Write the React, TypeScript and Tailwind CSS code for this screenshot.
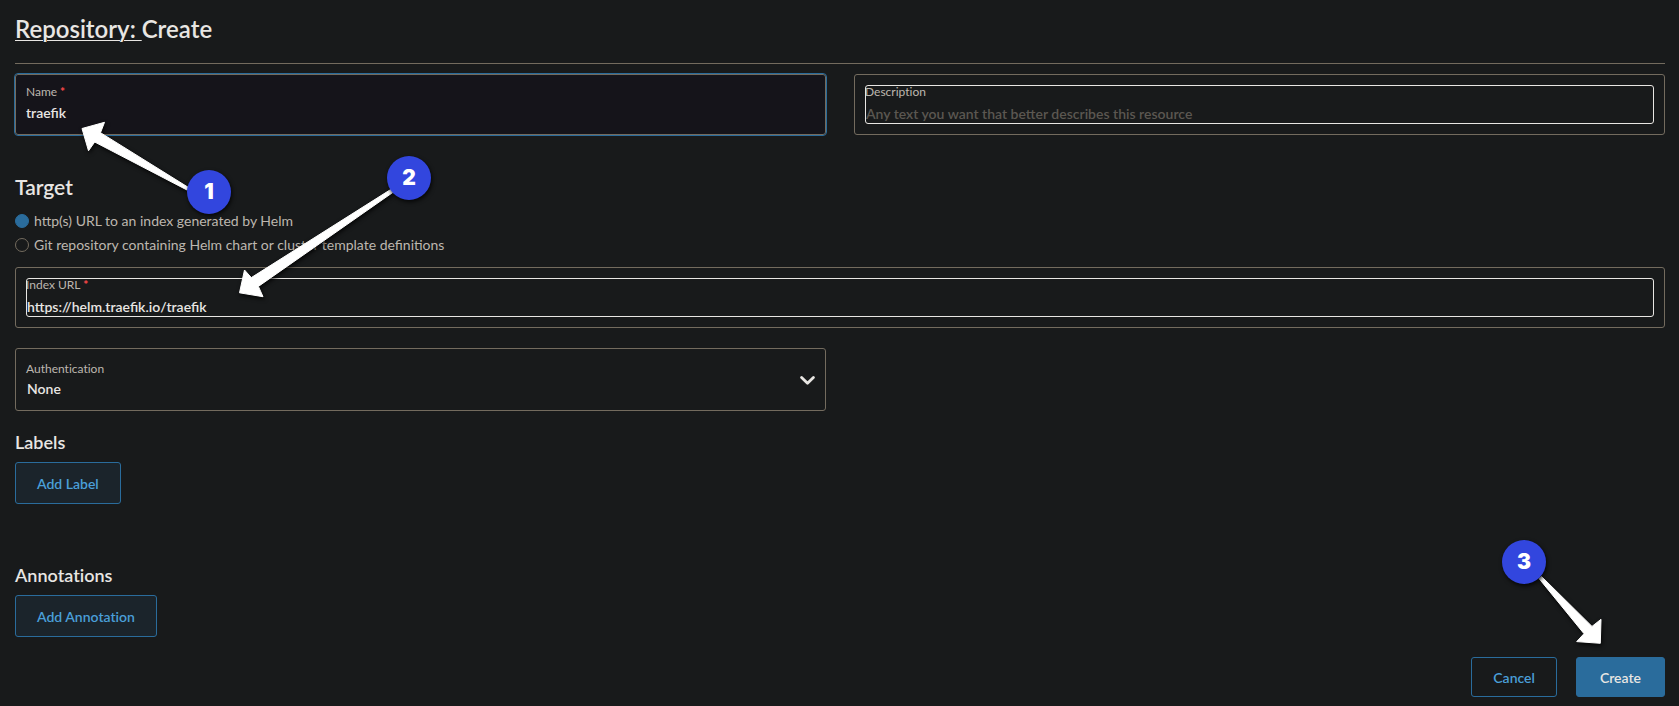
import type { ReactNode } from 'react';

type FieldProps = {
  id: string;
  label: string;
  required?: boolean;
  value?: string;
  placeholder?: string;
  focused?: boolean;
};

function Field({ id, label, required, value, placeholder, focused }: FieldProps) {
  return (
    <div
      className={
        focused
          ? 'min-w-0 rounded-[3px] border border-[#736b5e] bg-[#15141a] p-2.5 outline-1 outline-[#2a6c9c]'
          : 'min-w-0 rounded-[3px] border border-[#736b5e] p-2.5'
      }
    >
      <div
        className={
          focused
            ? 'flex h-[39px] flex-col gap-1'
            : 'flex h-[39px] flex-col gap-[5px] rounded-[3px] outline-1 -outline-offset-1 outline-[#e8e6e3]'
        }
      >
        <label
          htmlFor={id}
          className="text-[12px] leading-[14px] text-[#bdb7af] [font-variant-ligatures:none]"
        >
          {label}
          {required && <span className="font-black text-[#f64747]"> *</span>}
        </label>
        <input
          id={id}
          type="text"
          defaultValue={value}
          placeholder={placeholder}
          className={
            focused
              ? 'h-5 w-full bg-transparent text-[14px] font-semibold leading-5 text-[#e8e6e3] outline-none'
              : 'h-5 w-full bg-transparent px-px text-[14px] font-semibold leading-5 text-[#e8e6e3] outline-none placeholder:text-[#5b5751]'
          }
        />
      </div>
    </div>
  );
}

function Radio({ id, label, checked }: { id: string; label: string; checked?: boolean }) {
  return (
    <div className="flex h-6 items-center gap-[5px]">
      <input
        id={id}
        type="radio"
        name="target"
        defaultChecked={checked}
        className="size-3.5 shrink-0 appearance-none rounded-full border border-[#736b5e] checked:border-[#2a6c9c] checked:bg-[#2a6c9c]"
      />
      <label htmlFor={id} className="text-[14px] leading-[18px] text-[#bdb7af]">
        {label}
      </label>
    </div>
  );
}

function OutlineButton({ children }: { children: ReactNode }) {
  return (
    <button
      type="button"
      className="h-[42px] self-start rounded-[3px] border border-[#2a6c9c] bg-[#1b242b] px-[21px] text-[14px] font-semibold text-[#4a9fd8] [font-variant-ligatures:none]"
    >
      {children}
    </button>
  );
}

function Badge({ n, className }: { n: number; className: string }) {
  return (
    <span
      className={`absolute flex size-11 items-center justify-center rounded-full bg-[#3246de] font-[Inter,sans-serif] text-[21px] font-black text-white shadow-[1px_2px_4px_rgba(0,0,0,0.8)] ${className}`}
    >
      {n}
    </span>
  );
}

function Arrow({ points, className }: { points: string; className: string }) {
  return (
    <svg
      aria-hidden="true"
      className={`overflow-visible drop-shadow-[1px_2px_2px_rgba(0,0,0,0.8)] ${className}`}
    >
      <polygon points={points} fill="#fff" stroke="#fff" strokeWidth="1" strokeLinejoin="round" />
    </svg>
  );
}

export default function App() {
  return (
    <div className="relative min-h-screen bg-[#181a1b] pl-[15px] pr-3.5 font-[Lato,sans-serif] text-[#e8e6e3]">
      <header className="border-b border-[#736b5e] pb-[19px] pt-[13px]">
        <h1 className="text-[24px] font-semibold leading-[31px]">
          <a href="#" className="whitespace-pre underline decoration-1 underline-offset-2">
            {'Repository: '}
          </a>
          Create
        </h1>
      </header>

      <form className="flex flex-col pb-[9px] pt-2.5">
        <div className="grid grid-cols-2 gap-7">
          <Field id="name" label="Name" required value="traefik" focused />
          <Field
            id="description"
            label="Description"
            placeholder="Any text you want that better describes this resource"
          />
        </div>

        <h2 className="mt-[39px] text-[21px] font-semibold leading-[26px]">Target</h2>
        <div className="mt-[9px] flex flex-col">
          <Radio id="target-http" label="http(s) URL to an index generated by Helm" checked />
          <Radio
            id="target-git"
            label="Git repository containing Helm chart or cluster template definitions"
          />
        </div>

        <div className="mt-2.5 grid">
          <Field id="url" label="Index URL" required value="https://helm.traefik.io/traefik" />
        </div>

        <div className="mt-5 grid grid-cols-2 gap-7">
          <div className="relative flex h-[63px] flex-col rounded-[3px] border border-[#736b5e] px-2.5 pt-[13px]">
            <label
              htmlFor="auth"
              className="text-[12px] leading-[14px] text-[#bdb7af] [font-variant-ligatures:none]"
            >
              Authentication
            </label>
            <select
              id="auth"
              className="mt-[3px] h-5 w-full appearance-none bg-transparent px-px text-[14px] font-semibold leading-5 text-[#e8e6e3] outline-none"
            >
              <option>None</option>
            </select>
            <svg
              aria-hidden="true"
              viewBox="0 0 15 9"
              className="pointer-events-none absolute right-2.5 top-[27px] h-[9px] w-[15px]"
            >
              <path
                d="M1.6 1.5 7.5 7.3 13.4 1.5"
                fill="none"
                stroke="#e8e6e3"
                strokeWidth="2.8"
                strokeLinecap="round"
                strokeLinejoin="round"
              />
            </svg>
          </div>
        </div>

        <h3 className="mt-5 text-[18px] font-semibold leading-[22px]">Labels</h3>
        <div className="mt-[9px] flex">
          <OutlineButton>Add Label</OutlineButton>
        </div>

        <h3 className="mt-[60px] text-[18px] font-semibold leading-[22px] [font-variant-ligatures:none]">
          Annotations
        </h3>
        <div className="mt-[9px] flex">
          <OutlineButton>Add Annotation</OutlineButton>
        </div>

        <footer className="mt-5 flex justify-end gap-[19px]">
          <button
            type="button"
            className="h-10 rounded-[3px] border border-[#2a6c9c] px-[21px] text-[14px] font-semibold text-[#4a9fd8]"
          >
            Cancel
          </button>
          <button
            type="submit"
            className="h-10 rounded-[3px] border border-[#2a6c9c] bg-[#2a6c9c] px-[23px] text-[14px] font-semibold text-[#e8e6e3]"
          >
            Create
          </button>
        </footer>
      </form>

      <div className="pointer-events-none absolute left-20 top-[120px]">
        <Arrow
          className="h-[94px] w-[151px]"
          points="2,8.5 24.5,2.3 20.5,12.7 108.5,67.5 107,70 14.7,22 8.5,30.8"
        />
        <Badge n={1} className="left-[107px] top-[50px]" />
      </div>
      <div className="pointer-events-none absolute left-[230px] top-[150px]">
        <Arrow
          className="h-[150px] w-[201px]"
          points="9.5,142.8 14.5,120 21.3,127.6 161,39.3 163,42.3 28.4,136.4 33,146.7"
        />
        <Badge n={2} className="left-[157px] top-[6px]" />
      </div>
      <div className="pointer-events-none absolute right-[69px] top-[540px]">
        <Arrow
          className="h-[110px] w-[108px]"
          points="37,38.5 39.5,36.5 90,86.4 99,79.3 98.3,103.3 74.7,101.6 82,93.7"
        />
        <Badge n={3} className="left-0 top-0" />
      </div>
    </div>
  );
}
